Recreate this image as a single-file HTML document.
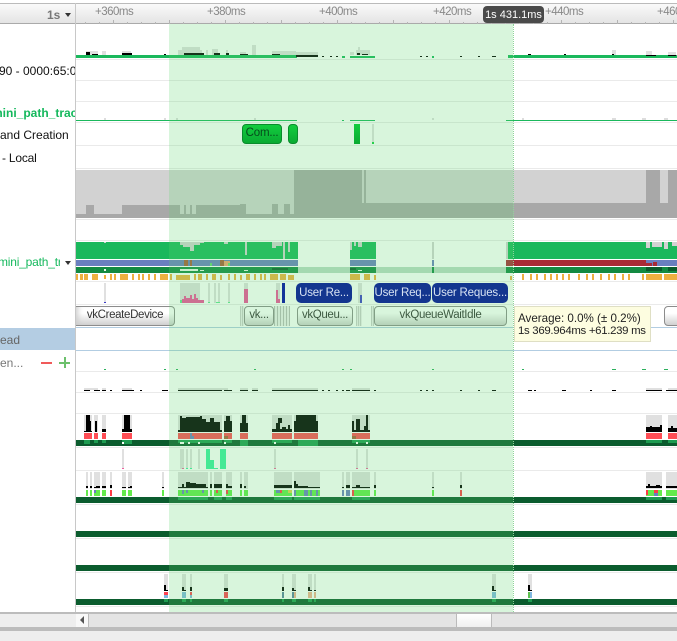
<!DOCTYPE html>
<html><head><meta charset="utf-8"><style>
html,body{margin:0;padding:0;background:#fff}
#r{position:relative;width:677px;height:641px;overflow:hidden;font:12px "Liberation Sans",sans-serif;background:#fff}
.a{position:absolute;white-space:nowrap}
svg{position:absolute;left:0;top:0}
.s{position:absolute;top:306px;height:18px;line-height:17px;text-align:center;border:1px solid #8c8c8c;border-radius:4px;background:linear-gradient(#fff 35%,#d0d0d0);color:#333;overflow:hidden;white-space:nowrap;font-size:11.5px;letter-spacing:-.35px}
.b{position:absolute;top:283px;height:20px;line-height:20px;text-align:center;background:#13368f;border-radius:5px;color:#d7e2f2;overflow:hidden;white-space:nowrap;font-size:11.5px;letter-spacing:-.2px}
.l{position:absolute;left:0;width:75px;overflow:hidden;white-space:nowrap;height:16px;line-height:16px}
.t{position:absolute;top:6px;color:#888;font-size:11.5px;letter-spacing:-.5px;white-space:nowrap}
</style></head><body><div id="r">
<div class="a" style="left:0;top:0;width:677px;height:3px;background:#fff"></div>
<div class="a" style="left:0;top:3px;width:677px;height:21px;background:linear-gradient(#fafafa,#e4e4e4);border-top:1px solid #bbb;border-bottom:1px solid #aaa;box-sizing:border-box"></div>

<svg width="677" height="641" shape-rendering="crispEdges">
<path fill="#eaeaea" d="M76 59h601v1h-601zM76 80h601v1h-601zM76 101h601v1h-601zM76 122h601v1h-601zM76 145h601v1h-601zM76 168h601v1h-601zM76 219h601v1h-601zM76 240h601v1h-601zM76 281h601v1h-601zM76 304h601v1h-601zM76 371h601v1h-601zM76 392h601v1h-601zM76 413h601v1h-601zM76 447h601v1h-601zM76 470h601v1h-601zM76 504h601v1h-601zM76 538h601v1h-601zM76 572h601v1h-601zM76 606h601v1h-601z"/>
<path fill="#b2cde2" d="M76 327h601v1h-601zM76 350h601v1h-601z"/>

<!-- row 1 -->
<path fill="#e0e0e0" d="M86 51h12v4h-12zM102 51h4v4h-4zM122 51h9v4h-9zM178 50h4v5h-4zM182 47h18v8h-18zM200 50h2v5h-2zM206 50h2v5h-2zM212 49h6v6h-6zM226 50h2v5h-2zM240 52h6v3h-6zM252 45h4v10h-4zM272 51h24v4h-24zM296 52h22v3h-22zM350 52h4v3h-4zM356 50h14v5h-14zM358 47h2v3h-2zM646 51h6v4h-6zM668 52h8v3h-8zM612 50h4v5h-4z"/>
<path fill="#1ab85c" d="M76 55h221v3h-221zM342 56h3v2h-3zM350 56h25v2h-25zM432 56h2v2h-2zM508 55h169v3h-169z"/>
<path fill="#000" d="M86 52h4v3h-4zM92 54h6v1h-6zM122 53h10v2h-10zM164 54h2v1h-2zM184 53h20v2h-20zM214 53h6v2h-6zM226 53h3v2h-3zM240 54h8v1h-8zM272 54h8v1h-8zM296 55h22v2h-22zM322 56h2v1h-2zM330 56h2v1h-2zM336 56h2v1h-2zM357 53h3v2h-3zM362 54h6v1h-6zM420 56h2v1h-2zM426 56h2v1h-2zM460 56h2v1h-2zM478 56h2v1h-2zM492 56h4v1h-4zM528 54h3v1h-3zM564 54h2v1h-2zM612 54h2v1h-2zM646 55h10v1h-10zM668 55h8v1h-8z"/>
<!-- row 4 -->
<path fill="#1ab85c" d="M76 120h221v1h-221zM342 120h2v1h-2zM350 120h25v1h-25zM506 120h171v1h-171z"/>
<path fill="#ddd" d="M104 118h2v2h-2zM164 118h2v2h-2zM176 118h2v2h-2zM254 118h2v2h-2zM432 118h2v2h-2zM522 118h2v2h-2zM612 118h4v2h-4zM642 118h4v2h-4zM664 118h4v2h-4z"/>
<!-- grey block -->
<path fill="#d2d2d2" d="M76 170h601v48h-601z"/>
<path fill="#a8a8a8" d="M76 214h218v4h-218zM86 205h8v9h-8zM122 205h56v9h-56zM178 205h2v9h-2zM184 205h2v9h-2zM190 205h2v9h-2zM196 205h44v9h-44zM240 204h6v10h-6zM272 204h6v10h-6zM284 204h6v10h-6zM294 170h68v48h-68zM364 170h2v48h-2zM362 203h315v15h-315zM646 170h14v33h-14zM668 170h9v33h-9z"/>
<!-- green stack -->
<path fill="#1ab85c" d="M76 242h222v17h-222zM350 242h26v17h-26zM506 242h171v17h-171z"/>
<path fill="#d2d2d2" d="M104 242h2v1h-2zM180 242h3v3h-3zM183 242h7v5h-7zM190 242h4v9h-4zM194 242h6v3h-6zM200 242h4v1h-4zM224 242h4v2h-4zM245 242h2v13h-2zM272 242h4v6h-4zM276 242h6v4h-6zM283 242h2v17h-2zM288 242h2v10h-2zM350 242h2v8h-2zM354 242h2v4h-2zM358 242h4v5h-4zM432 242h2v17h-2zM506 242h2v17h-2zM646 242h4v6h-4zM652 242h10v5h-10zM664 242h4v7h-4zM672 242h5v4h-5z"/>
<path fill="#6a7fbf" d="M76 260h222v6h-222zM350 260h26v6h-26zM432 260h2v6h-2zM646 260h31v6h-31z"/>
<path fill="#a82a35" d="M506 260h140v6h-140zM646 263h6v3h-6zM653 262h4v4h-4z"/>
<path fill="#a85c3a" d="M184 260h4v6h-4zM190 260h2v6h-2zM220 260h4v6h-4z"/>
<path fill="#f0a070" d="M224 261h6v5h-6z"/>
<path fill="#60d870" d="M210 263h2v3h-2zM228 263h2v3h-2z"/>
<path fill="#bbdac5" d="M298 267h208v6h-208z"/>
<path fill="#138a42" d="M76 267h222v6h-222zM350 267h26v6h-26zM432 267h2v6h-2zM506 267h171v6h-171z"/>
<path fill="#0a5a2c" d="M272 268h16v2h-16zM350 268h6v2h-6zM646 267h16v4h-16zM668 267h9v4h-9z"/>
<path fill="#e6f5ea" d="M104 269h2v2h-2zM180 269h18v2h-18zM200 270h4v1h-4zM244 270h4v1h-4zM358 270h4v1h-4z"/>
<!-- orange -->
<path fill="#eeb040" d="M76 274h2v6h-2zM80 274h3v6h-3zM84 274h4v6h-4zM92 274h6v6h-6zM104 275h2v4h-2zM110 274h2v6h-2zM114 274h2v6h-2zM120 274h8v6h-8zM132 274h2v6h-2zM138 274h2v6h-2zM142 274h2v6h-2zM148 274h2v6h-2zM154 274h2v6h-2zM160 274h8v6h-8zM170 274h2v6h-2zM176 275h14v5h-14zM194 274h2v6h-2zM198 274h4v6h-4zM206 274h2v6h-2zM212 274h4v6h-4zM220 275h2v5h-2zM228 274h2v6h-2zM234 274h2v6h-2zM240 275h2v5h-2zM246 274h4v6h-4zM254 274h2v6h-2zM260 274h2v6h-2zM264 274h2v6h-2zM270 274h8v6h-8zM280 274h6v6h-6zM288 275h6v5h-6zM350 274h10v6h-10zM364 274h6v6h-6zM374 275h2v5h-2zM510 276h2v4h-2zM522 274h2v6h-2zM530 274h2v6h-2zM536 274h2v6h-2zM544 274h2v6h-2zM550 274h2v6h-2zM556 274h2v6h-2zM562 274h2v6h-2zM568 274h2v6h-2zM578 274h2v6h-2zM586 274h2v6h-2zM592 274h2v6h-2zM600 274h2v6h-2zM608 274h2v6h-2zM614 274h2v6h-2zM622 274h2v6h-2zM628 274h2v6h-2zM642 274h2v6h-2zM646 274h16v6h-16zM664 274h13v6h-13z"/>
<!-- pink row -->
<path fill="#e0e0e0" d="M104 283h2v20h-2zM180 283h20v20h-20zM208 283h2v20h-2zM214 283h2v20h-2zM218 283h2v20h-2zM228 283h2v20h-2zM244 283h4v20h-4zM276 283h4v20h-4zM358 283h4v20h-4z"/>
<path fill="#f0509c" d="M182 299h2v4h-2zM184 296h2v7h-2zM186 298h4v5h-4zM190 295h2v8h-2zM192 299h2v4h-2zM194 294h2v9h-2zM196 298h2v5h-2zM198 300h6v3h-6zM244 289h4v14h-4zM276 290h2v13h-2zM278 299h2v4h-2zM360 299h1v4h-1z"/>
<path fill="#3c3cc8" d="M104 302h2v1h-2zM360 295h2v8h-2z"/>
<path fill="#60e890" d="M180 300h2v3h-2zM208 302h2v1h-2zM216 302h4v1h-4zM228 302h2v1h-2z"/>
<!-- Chart rows -->
<path fill="#2bb05c" d="M104 369h2v1h-2zM164 369h2v1h-2zM176 369h2v1h-2zM254 369h2v1h-2zM342 369h2v1h-2zM350 369h2v1h-2zM432 369h2v1h-2zM522 369h2v1h-2zM612 369h4v1h-4zM642 369h4v1h-4zM664 369h4v1h-4z"/>
<path fill="#e0e0e0" d="M84 388h14v2h-14zM102 388h4v2h-4zM122 388h10v2h-10zM178 388h50v2h-50zM240 388h8v2h-8zM252 388h6v2h-6zM272 388h46v2h-46zM352 388h18v2h-18zM646 388h16v2h-16zM668 388h9v2h-9z"/>
<path fill="#000" d="M84 390h6v1h-6zM94 390h6v1h-6zM102 390h4v1h-4zM110 390h2v1h-2zM122 390h12v1h-12zM140 390h2v1h-2zM162 390h6v1h-6zM178 390h44v1h-44zM224 390h8v1h-8zM240 390h8v1h-8zM252 390h6v1h-6zM272 390h46v1h-46zM322 390h2v1h-2zM328 390h2v1h-2zM336 390h2v1h-2zM342 390h2v1h-2zM346 390h4v1h-4zM352 390h18v1h-18zM374 390h2v1h-2zM420 390h2v1h-2zM426 390h2v1h-2zM432 390h2v1h-2zM460 390h2v1h-2zM478 390h2v1h-2zM492 390h4v1h-4zM528 390h4v1h-4zM534 390h2v1h-2zM562 390h4v1h-4zM590 390h2v1h-2zM612 390h4v1h-4zM646 390h16v1h-16zM666 390h11v1h-11z"/>
<path fill="#e0e0e0" d="M84 415h8v17h-8zM94 415h4v17h-4zM102 415h4v17h-4zM122 415h10v17h-10zM178 415h44v17h-44zM224 415h8v17h-8zM240 415h8v17h-8zM272 415h20v17h-20zM294 415h24v17h-24zM352 415h18v17h-18zM646 415h16v17h-16zM668 415h9v17h-9z"/>
<path fill="#000" d="M84 431h8v1h-8zM86 415h4v16h-4zM90 421h1v10h-1zM95 421h2v11h-2zM102 429h4v3h-4zM124 415h6v17h-6zM122 429h10v3h-10zM178 430h44v2h-44zM180 416h2v14h-2zM182 418h4v12h-4zM186 417h14v13h-14zM200 416h2v14h-2zM202 419h4v11h-4zM206 422h4v8h-4zM210 418h4v12h-4zM214 422h6v8h-6zM224 421h8v11h-8zM226 416h4v5h-4zM240 423h8v9h-8zM242 415h4v8h-4zM272 429h20v3h-20zM276 423h4v6h-4zM278 418h4v5h-4zM282 427h4v2h-4zM288 425h2v4h-2zM294 421h24v11h-24zM296 415h20v6h-20zM352 430h18v2h-18zM352 421h2v9h-2zM356 419h4v11h-4zM364 426h2v4h-2zM366 415h2v15h-2zM646 427h16v5h-16zM650 426h2v1h-2zM660 425h2v2h-2zM668 428h9v4h-9zM671 426h2v2h-2z"/>
<path fill="#ff4d55" d="M84 433h8v6h-8zM94 433h4v6h-4zM102 433h4v6h-4zM122 433h10v6h-10zM178 433h44v6h-44zM224 433h8v6h-8zM240 433h8v6h-8zM272 433h20v6h-20zM294 433h24v6h-24zM352 433h18v6h-18zM646 433h16v6h-16zM668 433h9v6h-9z"/>
<path fill="#6a7fbf" d="M190 433h2v6h-2zM192 436h2v3h-2z"/>
<path fill="#a85c3a" d="M224 436h4v3h-4zM352 436h4v3h-4z"/>
<path fill="#0b5c2e" d="M76 440h601v6h-601z"/>
<path fill="#1d9b50" d="M84 440h6v4h-6zM94 440h4v3h-4zM102 440h4v3h-4zM122 440h10v4h-10zM178 440h44v3h-44zM224 440h8v3h-8zM240 440h8v6h-8zM272 440h20v3h-20zM298 440h20v6h-20zM352 440h18v3h-18zM646 440h16v3h-16zM668 440h9v3h-9z"/>
<path fill="#fff" d="M122 442h2v2h-2zM180 442h4v2h-4zM188 442h2v2h-2zM198 442h2v2h-2zM224 442h2v2h-2zM274 442h2v2h-2zM356 442h2v2h-2zM366 442h2v2h-2z"/>
<!-- row teal -->
<path fill="#e0e0e0" d="M122 449h2v20h-2zM180 449h4v20h-4zM186 449h2v20h-2zM190 449h2v20h-2zM198 449h2v20h-2zM274 449h2v20h-2zM356 449h2v20h-2zM366 449h2v20h-2z"/>
<path fill="#3cf0a0" d="M206 449h4v20h-4zM210 460h4v9h-4zM214 468h4v1h-4zM220 449h6v20h-6zM186 468h2v1h-2zM190 468h2v1h-2z"/>
<path fill="#f060a0" d="M122 468h2v1h-2zM182 468h2v1h-2zM274 468h2v1h-2zM356 468h2v1h-2zM366 468h2v1h-2z"/>
<!-- row 472 -->
<path fill="#e0e0e0" d="M86 472h2v17h-2zM90 472h2v17h-2zM94 472h6v17h-6zM102 472h4v17h-4zM110 472h2v17h-2zM122 472h4v17h-4zM128 472h4v17h-4zM162 472h2v17h-2zM178 472h30v17h-30zM210 472h2v17h-2zM214 472h8v17h-8zM226 472h6v17h-6zM240 472h2v17h-2zM244 472h4v17h-4zM274 472h18v17h-18zM294 472h26v17h-26zM342 472h2v17h-2zM346 472h4v17h-4zM352 472h18v17h-18zM374 472h2v17h-2zM432 472h2v17h-2zM460 472h2v17h-2zM646 472h16v17h-16zM666 472h11v17h-11z"/>
<path fill="#000" d="M86 486h2v2h-2zM90 486h2v2h-2zM94 487h6v1h-6zM96 486h4v1h-4zM102 486h4v2h-4zM110 485h2v3h-2zM122 487h4v1h-4zM128 487h4v1h-4zM130 486h2v1h-2zM162 487h2v1h-2zM178 487h30v1h-30zM182 484h2v3h-2zM186 482h4v5h-4zM190 483h6v4h-6zM196 484h10v3h-10zM210 484h2v4h-2zM214 484h8v4h-8zM226 484h2v4h-2zM228 486h4v2h-4zM240 484h2v4h-2zM244 486h2v2h-2zM274 485h18v3h-18zM294 487h26v1h-26zM294 481h2v6h-2zM296 484h2v3h-2zM298 486h10v1h-10zM342 487h2v1h-2zM346 485h4v3h-4zM352 487h18v1h-18zM356 485h4v2h-4zM374 485h2v3h-2zM432 487h2v1h-2zM460 485h2v3h-2zM646 486h16v2h-16zM648 484h2v2h-2zM656 485h4v1h-4zM666 486h11v2h-11z"/>
<path fill="#64ea4c" d="M86 490h2v6h-2zM90 490h2v6h-2zM94 490h6v6h-6zM102 490h4v6h-4zM122 490h4v6h-4zM128 490h4v6h-4zM162 490h2v6h-2zM178 490h30v6h-30zM210 490h2v6h-2zM214 490h8v6h-8zM226 490h6v6h-6zM240 490h2v6h-2zM244 490h4v6h-4zM274 490h18v6h-18zM294 490h26v6h-26zM342 490h2v6h-2zM346 490h4v6h-4zM352 490h18v6h-18zM374 490h2v6h-2zM432 490h2v6h-2zM646 490h16v6h-16zM666 490h11v6h-11z"/>
<path fill="#ff3b45" d="M110 490h2v6h-2zM216 490h2v3h-2zM226 490h2v4h-2zM280 490h2v3h-2zM352 490h2v6h-2zM460 490h2v6h-2zM646 490h2v5h-2zM654 490h4v3h-4z"/>
<path fill="#6a7fbf" d="M94 490h2v3h-2zM182 490h2v4h-2zM186 490h2v3h-2zM202 490h2v3h-2zM276 490h4v3h-4zM294 490h2v6h-2zM304 490h4v6h-4zM310 490h2v6h-2zM316 490h2v6h-2zM342 490h2v6h-2zM346 490h4v6h-4zM654 493h4v3h-4z"/>
<path fill="#e0d050" d="M288 490h4v3h-4z"/>
<path fill="#0b5c2e" d="M76 497h601v6h-601zM76 531h601v6h-601zM76 565h601v6h-601zM76 599h601v6h-601z"/>
<path fill="#1d9b50" d="M178 497h30v3h-30zM214 497h8v3h-8zM226 497h6v3h-6zM274 497h18v3h-18zM294 497h26v3h-26zM352 497h18v3h-18zM646 497h16v3h-16zM666 497h11v3h-11z"/>
<!-- bottom row -->
<path fill="#e0e0e0" d="M164 574h4v17h-4zM182 574h4v17h-4zM190 574h2v17h-2zM224 574h4v17h-4zM282 574h2v17h-2zM292 574h4v17h-4zM308 574h4v17h-4zM314 574h2v17h-2zM492 574h4v17h-4zM528 574h4v17h-4z"/>
<path fill="#000" d="M164 585h2v6h-2zM166 590h2v1h-2zM182 587h2v4h-2zM184 590h2v1h-2zM190 587h2v4h-2zM224 588h4v3h-4zM282 587h2v4h-2zM292 588h2v3h-2zM294 590h2v1h-2zM308 587h2v4h-2zM310 590h2v1h-2zM314 590h2v1h-2zM492 586h2v5h-2zM494 590h2v1h-2zM528 585h2v6h-2zM530 590h2v1h-2z"/>
<path fill="#80b8e0" d="M164 595h4v3h-4zM182 592h4v6h-4zM190 595h2v3h-2zM492 592h4v6h-4zM530 592h2v6h-2z"/>
<path fill="#ff4050" d="M164 592h4v3h-4zM190 592h2v3h-2zM224 592h4v6h-4z"/>
<path fill="#f2b090" d="M294 592h2v6h-2zM308 592h4v6h-4zM314 592h2v6h-2z"/>
<path fill="#5a80a0" d="M282 592h2v6h-2zM292 592h2v6h-2z"/>
<path fill="#5ec050" d="M528 592h2v6h-2z"/>
<path fill="#1d9b50" d="M164 599h4v3h-4zM182 599h4v3h-4zM190 599h2v3h-2zM224 599h4v3h-4zM282 599h2v3h-2zM292 599h4v3h-4zM308 599h4v3h-4zM314 599h2v3h-2zM492 599h4v3h-4zM528 599h4v3h-4z"/>
</svg>

<!-- slices row 124 -->
<div class="a" style="left:372px;top:124px;width:2px;height:20px;background:linear-gradient(#e0e0e0 90%,#14d040 90%)"></div>

<!-- slices row 306 -->
<div class="s" style="left:76px;width:98px;border-left:0;border-radius:0 4px 4px 0;padding-right:0;box-shadow:inset 6px 0 6px -4px #ccc">vkCreateDevice</div>
<div class="a" style="left:240px;top:306px;width:4px;height:20px;background:repeating-linear-gradient(90deg,#ccc 0 1px,#eee 1px 2px)"></div>
<div class="s" style="left:244px;width:28px">vk...</div>
<div class="a" style="left:274px;top:306px;width:16px;height:20px;background:repeating-linear-gradient(90deg,#bbb 0 1px,#eee 1px 3px)"></div>
<div class="s" style="left:297px;width:54px">vkQueu...</div>
<div class="a" style="left:356px;top:306px;width:6px;height:20px;background:repeating-linear-gradient(90deg,#ccc 0 1px,#eee 1px 2px)"></div>
<div class="a" style="left:371px;top:306px;width:3px;height:20px;background:repeating-linear-gradient(90deg,#ccc 0 1px,#eee 1px 2px)"></div>
<div class="s" style="left:374px;width:131px">vkQueueWaitIdle</div>
<div class="s" style="left:664px;width:20px"></div>

<!-- selection -->
<div class="a" style="left:169px;top:24px;width:344px;height:588px;background:rgba(96,214,112,.245)"></div>
<div class="a" style="left:513px;top:24px;width:0;height:588px;border-left:1px dotted #8fd49a"></div>

<!-- over-selection slices -->
<div class="a" style="left:242px;top:124px;width:38px;height:18px;line-height:17px;border:1px solid #0a8c2c;border-radius:4px;background:linear-gradient(#12cc3e,#0aaa32);color:#064a1c;text-align:center;font-size:11.5px;letter-spacing:-.2px">Com...</div>
<div class="a" style="left:288px;top:124px;width:8px;height:18px;border:1px solid #0a8c2c;border-radius:4px;background:linear-gradient(#12cc3e,#0aaa32)"></div>
<div class="a" style="left:354px;top:124px;width:6px;height:20px;background:linear-gradient(#12cc3e,#0aaa32)"></div>
<div class="a" style="left:282px;top:283px;width:3px;height:20px;background:#14349a"></div>
<div class="b" style="left:296px;width:56px">User Re...</div>
<div class="b" style="left:374px;width:57px">User Req...</div>
<div class="b" style="left:432px;width:76px">User Reques...</div>

<!-- left panel -->
<div class="a" style="left:0;top:0;width:75px;height:3px;background:#fff"></div>
<div class="a" style="left:75px;top:3px;width:1px;height:609px;background:#c8c8c8"></div>
<div class="a" style="left:0;top:328px;width:75px;height:22px;background:#b4cde3"></div>
<div class="a" style="left:47px;top:8px;font-weight:bold;color:#777;font-size:12px">1s</div>
<div class="a" style="left:65px;top:13px;width:0;height:0;border:3px solid transparent;border-top:4px solid #333;border-bottom:0"></div>
<div class="l" style="top:63px;color:#111"><span class="a" style="left:-1px">90 - 0000:65:00</span></div>
<div class="l" style="top:105px;color:#14b85c;font-weight:bold"><span class="a" style="left:-8px">mini_path_trace</span></div>
<div class="l" style="top:127px;color:#111"><span class="a" style="left:0">and Creation</span></div>
<div class="l" style="top:150px;color:#111"><span class="a" style="left:2px;letter-spacing:-.2px">- Local</span></div>
<div class="l" style="top:254px;width:60px;color:#14b85c"><span class="a" style="left:-2px;letter-spacing:-.2px">mini_path_trace</span></div>
<div class="a" style="left:65px;top:261px;width:0;height:0;border:3px solid transparent;border-top:4px solid #333;border-bottom:0"></div>
<div class="l" style="top:332px;color:#666"><span class="a" style="left:0">ead</span></div>
<div class="l" style="top:355px;color:#777"><span class="a" style="left:0">en...</span></div>
<div class="a" style="left:41px;top:362px;width:11px;height:2px;background:#f05a5a"></div>
<div class="a" style="left:59px;top:362px;width:11px;height:2px;background:#6cc06c"></div>
<div class="a" style="left:64px;top:357px;width:2px;height:11px;background:#6cc06c"></div>

<!-- ruler -->
<svg width="677" height="26" shape-rendering="crispEdges"><path fill="#b4b4b4" d="M85 22h1v2h-1zM99 22h1v2h-1zM113 20h1v4h-1zM127 22h1v2h-1zM141 22h1v2h-1zM155 22h1v2h-1zM169 20h1v4h-1zM183 22h1v2h-1zM197 22h1v2h-1zM211 22h1v2h-1zM225 20h1v4h-1zM239 22h1v2h-1zM253 22h1v2h-1zM267 22h1v2h-1zM281 20h1v4h-1zM295 22h1v2h-1zM309 22h1v2h-1zM323 22h1v2h-1zM337 20h1v4h-1zM351 22h1v2h-1zM365 22h1v2h-1zM379 22h1v2h-1zM393 20h1v4h-1zM407 22h1v2h-1zM421 22h1v2h-1zM435 22h1v2h-1zM449 20h1v4h-1zM463 22h1v2h-1zM477 22h1v2h-1zM491 22h1v2h-1zM505 20h1v4h-1zM519 22h1v2h-1zM533 22h1v2h-1zM547 22h1v2h-1zM561 20h1v4h-1zM575 22h1v2h-1zM589 22h1v2h-1zM603 22h1v2h-1zM617 20h1v4h-1zM631 22h1v2h-1zM645 22h1v2h-1zM659 22h1v2h-1zM673 20h1v4h-1z"/></svg>
<div class="t" style="left:95px">+360ms</div>
<div class="t" style="left:207px">+380ms</div>
<div class="t" style="left:319px">+400ms</div>
<div class="t" style="left:433px">+420ms</div>
<div class="t" style="left:545px">+440ms</div>
<div class="t" style="left:657px">+460ms</div>
<div class="a" style="left:483px;top:6px;width:61px;height:17px;line-height:18px;background:#4a4a4a;border-radius:4px;color:#fff;text-align:center;font-size:11px">1s 431.1ms</div>

<!-- tooltip -->
<div class="a" style="left:514px;top:306px;width:135px;height:34px;background:#fdfde0;border:1px solid #dfdfc4;color:#222;line-height:13px;padding:0;font-size:11.6px"><div style="padding:5px 0 0 3px">Average: 0.0% (± 0.2%)</div><div style="padding:0 0 0 3px;font-size:11.4px;letter-spacing:-.3px">1s 369.964ms +61.239 ms</div></div>

<!-- bottom -->
<div class="a" style="left:0;top:612px;width:677px;height:29px;background:#eee"></div>
<div class="a" style="left:0;top:612px;width:677px;height:2px;background:#bcbcbc"></div>
<div class="a" style="left:76px;top:614px;width:601px;height:13px;background:#e4e4e4"></div>
<div class="a" style="left:76px;top:614px;width:13px;height:13px;background:#f8f8f8;border-right:1px solid #bbb;box-sizing:border-box"></div>
<div class="a" style="left:80px;top:616px;width:0;height:0;border:4px solid transparent;border-right:4px solid #555;border-left:0"></div>
<div class="a" style="left:456px;top:614px;width:36px;height:13px;box-sizing:border-box;background:linear-gradient(#fff,#f0f0f0);border:1px solid #bbb;border-top:0;border-bottom:0"></div>
<div class="a" style="left:0;top:627px;width:677px;height:4px;background:#bcbcbc"></div>
</div></body></html>
